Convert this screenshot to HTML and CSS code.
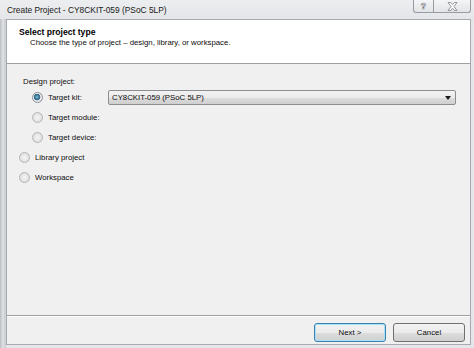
FILE: index.html
```html
<!DOCTYPE html>
<html lang="en">
<head>
    <meta charset="UTF-8">
    <meta name="viewport" content="width=device-width, initial-scale=1.0">
    <title>Create Project</title>
    <link rel="stylesheet" href="styles.css">
</head>
<body>
    <div class="window">
        <div class="titlebar">
            <span class="title">Create Project - CY8CKIT-059 (PSoC 5LP)</span>
            <div class="caption-buttons">
                <div class="cap-btn help">?</div>
                <div class="cap-btn close">
                    <svg width="11" height="9" viewBox="0 0 11 9">
                        <path d="M1 0.5 H3.8 L5.5 2.6 L7.2 0.5 H10 L7 4.5 L10 8.5 H7.2 L5.5 6.4 L3.8 8.5 H1 L4 4.5 Z" fill="#fbfbfb" stroke="#7d8189" stroke-width="0.8"/>
                    </svg>
                </div>
            </div>
        </div>
        <div class="client">
            <div class="header">
                <div class="header-title">Select project type</div>
                <div class="header-sub">Choose the type of project &ndash; design, library, or workspace.</div>
            </div>
            <div class="content">
                <div class="group-label">Design project:</div>
                <div class="row sub kit">
                    <span class="radio checked"></span>
                    <span class="label kit-label">Target kit:</span>
                    <div class="select">
                        <span>CY8CKIT-059 (PSoC 5LP)</span>
                        <svg width="6" height="4" viewBox="0 0 6 4"><path d="M0 0 H6 L3 4 Z" fill="#1a1a1a"/></svg>
                    </div>
                </div>
                <div class="row sub">
                    <span class="radio"></span>
                    <span class="label">Target module:</span>
                </div>
                <div class="row sub">
                    <span class="radio"></span>
                    <span class="label">Target device:</span>
                </div>
                <div class="row">
                    <span class="radio"></span>
                    <span class="label">Library project</span>
                </div>
                <div class="row">
                    <span class="radio"></span>
                    <span class="label">Workspace</span>
                </div>
            </div>
            <div class="footer">
                <button type="button" class="button default">Next &gt;</button>
                <button type="button" class="button">Cancel</button>
            </div>
        </div>
    </div>
</body>
</html>
```

FILE: styles.css
```css
body {
    margin: 0;
    font-family: "Liberation Sans", Arial, sans-serif;
    font-size: 7.8px;
    color: #0c0c0c;
    background-color: #d6d9dd;
}
.window {
    display: flex;
    flex-direction: column;
    width: 474px;
    height: 348px;
    background: linear-gradient(to right, #b9bdc2 0, #e2e4e7 3px, #c8cbcf 5px, #e4e6e9 7px, #e4e6e9 100%);
}
.titlebar {
    display: flex;
    height: 19px;
    background: linear-gradient(to bottom, #eceef0, #e3e5e8);
}
.title {
    padding: 5px 0 0 7px;
    font-size: 8.4px;
    color: #202020;
}
.caption-buttons {
    display: flex;
    margin-left: auto;
    margin-right: 3px;
    height: 13px;
}
.cap-btn {
    display: flex;
    justify-content: center;
    align-items: center;
    border: 1px solid #979ba2;
    border-top: none;
    background: linear-gradient(to bottom, #f4f5f6, #e1e3e6);
}
.help {
    width: 19px;
    border-radius: 0 0 0 3px;
    font-weight: bold;
    font-size: 9px;
    color: #fdfdfd;
    -webkit-text-stroke: 0.6px #7d8189;
}
.close {
    width: 36px;
    border-left: none;
    border-radius: 0 0 3px 0;
}
.client {
    display: flex;
    flex-direction: column;
    flex: 1;
    margin: 0 3px 3px 6px;
    border: 1px solid #a7aaae;
    background-color: #f0f0f0;
}
.header {
    height: 36px;
    padding: 7px 0 0 12px;
    background-color: #ffffff;
    border-bottom: 1px solid #a0a0a0;
}
.header-title {
    font-weight: bold;
    font-size: 8.6px;
    line-height: 11px;
    color: #000;
}
.header-sub {
    padding-left: 11px;
    line-height: 10px;
}
.content {
    flex: 1;
    padding: 12px 14px 0 12px;
}
.group-label {
    padding-left: 4px;
    line-height: 12px;
}
.row {
    display: flex;
    align-items: center;
    height: 20px;
}
.row.kit {
    height: 19px;
}
.sub {
    padding-left: 13px;
}
.radio {
    width: 9px;
    height: 9px;
    border: 1px solid #b4b6b9;
    border-radius: 50%;
    background: radial-gradient(circle at 50% 50%, #f6f6f6 0, #e3e3e3 60%, #d4d4d4 100%);
    flex-shrink: 0;
}
.radio.checked {
    border-color: #8c9096;
    background: radial-gradient(circle at 45% 45%, #8fc4dc 0, #2f6f93 32%, #3d6f8c 42%, #eeeeee 52%, #d2d2d2 100%);
}
.label {
    margin-left: 5px;
}
.kit-label {
    width: 60px;
}
.select {
    display: flex;
    align-items: center;
    justify-content: space-between;
    flex: 1;
    height: 13px;
    padding: 0 4px 0 3px;
    border: 1px solid #8b8d90;
    border-radius: 2px;
    background: linear-gradient(to bottom, #f2f2f2 0, #ebebeb 50%, #dddddd 51%, #cfcfcf 100%);
    color: #0c0c0c;
}
.footer {
    display: flex;
    justify-content: flex-end;
    gap: 7px;
    height: 21px;
    padding: 7px 5px 0 0;
    border-top: 1px solid #a0a0a0;
    box-shadow: inset 0 1px 0 #ffffff;
}
.button {
    width: 72px;
    height: 19px;
    padding: 0;
    font-family: "Liberation Sans", Arial, sans-serif;
    font-size: 7.8px;
    color: #0c0c0c;
    border: 1px solid #707070;
    border-radius: 3px;
    background: linear-gradient(to bottom, #f2f2f2 0, #ebebeb 50%, #dddddd 51%, #cfcfcf 100%);
}
.button.default {
    border-color: #3c7fb1;
    box-shadow: inset 0 0 0 1px #a6e3f7;
}
```
